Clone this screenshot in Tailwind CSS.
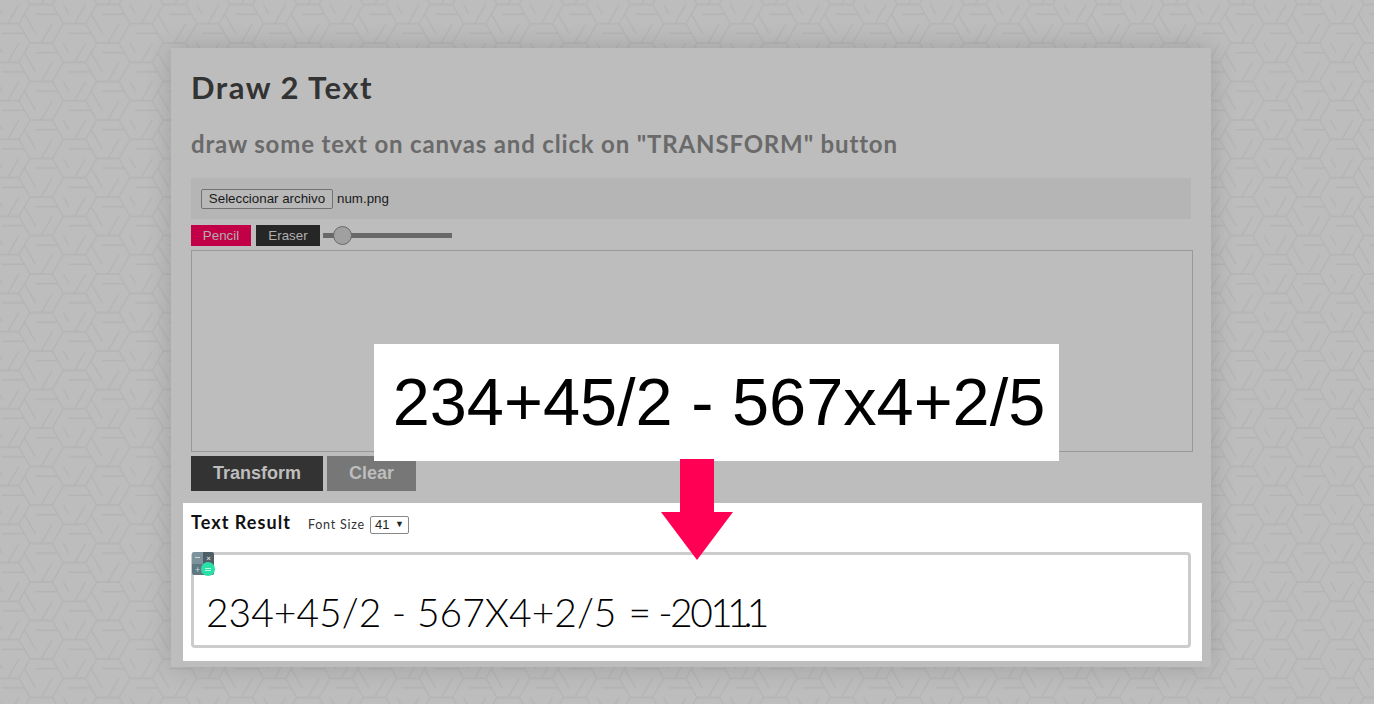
<!DOCTYPE html>
<html>
<head>
<meta charset="utf-8">
<script src="https://cdn.jsdelivr.net/npm/@tailwindcss/browser@4"></script>
</head>
<body class="relative w-[1374px] h-[704px] overflow-hidden bg-[#bdbdbd] font-['Lato','Liberation_Sans',sans-serif]">
<svg class="absolute inset-0 w-full h-full" xmlns="http://www.w3.org/2000/svg">
  <defs>
    <g id="hx" fill="none" stroke="#b3b3b3" stroke-width="1.3">
      <path id="arm" d="M0 0L22.2 0M5.5 9.6L27.7 9.6"/>
      <use href="#arm" transform="rotate(120)"/>
      <use href="#arm" transform="rotate(240)"/>
    </g>
    <pattern id="weave" patternUnits="userSpaceOnUse" width="66.7" height="38.5" x="30" y="4.5">
      <use href="#hx" x="0" y="0"/>
      <use href="#hx" x="66.7" y="0"/>
      <use href="#hx" x="0" y="38.5"/>
      <use href="#hx" x="66.7" y="38.5"/>
      <use href="#hx" x="33.35" y="19.25"/>
    </pattern>
  </defs>
  <rect width="1374" height="704" fill="url(#weave)"/>
</svg>

<main class="relative ml-[171px] top-[48px] w-[1040px] h-[619px] bg-[#bdbdbd] shadow-[0_0_24px_rgba(0,0,0,0.16)] px-[20px]">
  <h1 class="pt-[19px] text-[31px] leading-[40px] font-bold text-[#333] tracking-[1.5px]">Draw 2 Text</h1>
  <h2 class="mt-[22px] text-[24px] leading-[30px] font-bold text-[#6a6a6a] tracking-[0.83px]">draw some text on canvas and click on "TRANSFORM" button</h2>
  <div class="mt-[19px] h-[41px] w-[1000px] bg-[#b5b5b5] flex items-center pl-[10px] font-['Liberation_Sans',sans-serif] text-[13.33px] text-[#1a1a1a]">
    <span class="h-[20px] w-[132px] flex items-center justify-center border border-[#727272] rounded-[2px] bg-[#b8b8b8]">Seleccionar archivo</span>
    <span class="ml-[4px]">num.png</span>
  </div>
  <div class="mt-[6px] h-[21px] flex items-center font-['Liberation_Sans',sans-serif] text-[13.33px] text-[#b0b0b0]">
    <span class="w-[60px] h-[21px] bg-[#c20048] flex items-center justify-center">Pencil</span>
    <span class="ml-[5px] w-[64px] h-[21px] bg-[#262626] flex items-center justify-center">Eraser</span>
    <span class="relative ml-[3px] w-[129px] h-[5px] bg-[#686868]">
      <span class="absolute left-[10px] top-[-7px] w-[19px] h-[19px] rounded-full bg-[#a0a0a0] border border-[#686868]"></span>
    </span>
  </div>
  <div class="mt-[4px] w-[1002px] h-[202px] border border-[#999]"></div>
  <div class="mt-[4px] flex gap-[4px] font-['Liberation_Sans',sans-serif] font-bold text-[18px] text-[#bdbdbd]">
    <span class="w-[132px] h-[35px] bg-[#333] flex items-center justify-center">Transform</span>
    <span class="w-[89px] h-[35px] bg-[#777] flex items-center justify-center">Clear</span>
  </div>
  <section class="mt-[12px] -ml-[8px] w-[1019px] h-[158px] bg-white px-[8px] relative">
    <div class="flex items-center h-[38px] pt-[6px]">
      <span class="mb-[6px] text-[18px] font-bold text-[#111] tracking-[1.05px] w-[117px]">Text Result</span>
      <span class="text-[12.5px] text-[#333] tracking-[0.75px] w-[62px]">Font Size</span>
      <span class="w-[39px] h-[18px] border border-[#888] rounded-[2px] flex items-center font-['Liberation_Sans',sans-serif] text-[13px] text-[#222] pl-[4px] relative">41<span class="absolute right-[4px] text-[9px]">▼</span></span>
    </div>
    <div class="mt-[11px] w-[1000px] h-[96px] border-[3px] border-[#ccc] rounded-[4px] pl-[12px] pt-[31px] text-[39px] leading-[52px] font-light text-black whitespace-pre">234+45/2 - 567X4+2/5<span class="tracking-[1.3px]"> </span><span class="tracking-[-1.7px]">= </span><span class="tracking-[-2.5px]">-20</span><span class="tracking-[-6px]">11.1</span></div>
    <span class="absolute left-[9px] top-[49px] w-[22px] h-[23px] grid grid-cols-2 grid-rows-2 rounded-[2px] overflow-hidden">
      <span class="bg-[#7d939c] flex items-center justify-center"><span class="w-[5px] h-[1px] bg-[#cfd8dc]"></span></span>
      <span class="bg-[#4e5d66] flex items-center justify-center text-white text-[8px] leading-none">×</span>
      <span class="bg-[#5f7781] flex items-center justify-center text-[#cfd8dc] text-[9px] leading-none">+</span>
      <span class="bg-[#4e5d66]"></span>
    </span>
    <span class="absolute left-[18px] top-[59px] w-[14px] h-[14px] rounded-full bg-[#2be0a8] flex items-center justify-center"><span class="w-[6px] h-[3px] border-y border-[#b6f5e0]"></span></span>
  </section>
</main>

<div class="absolute left-[374px] top-[344px] w-[685px] h-[117px] bg-white flex items-center justify-center pl-[5px] font-['Liberation_Sans',sans-serif] text-[66.7px] text-black whitespace-nowrap">234+45/2 - 567x4+2/5</div>
<svg class="absolute left-[661px] top-[459px] w-[72px] h-[101px]" viewBox="0 0 72 101" xmlns="http://www.w3.org/2000/svg"><polygon points="19,0 53,0 53,53 72,53 36,101 0,53 19,53" fill="#ff0055"/></svg>
</body>
</html>
